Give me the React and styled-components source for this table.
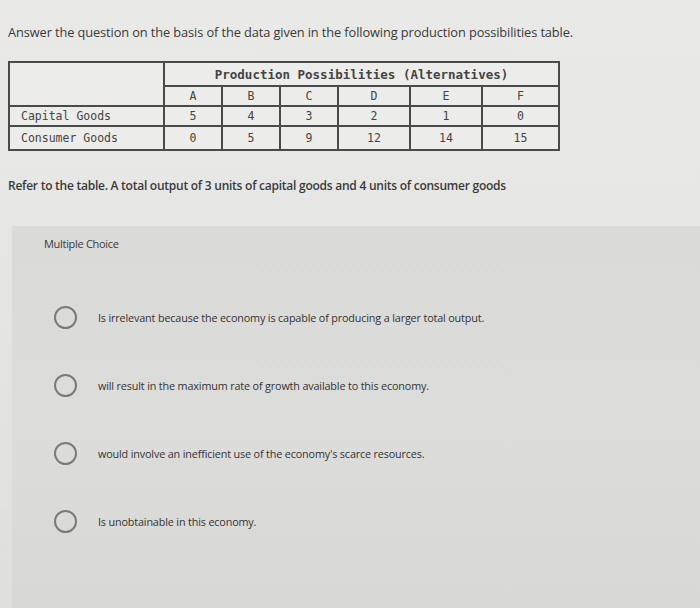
import React from 'react';
import styled, { createGlobalStyle } from 'styled-components';

const GlobalStyle = createGlobalStyle`
  html, body {
    margin: 0;
    padding: 0;
  }
  body {
    background: linear-gradient(180deg, #e9e9e7 0%, #e4e4e2 60%, #dededc 100%);
    font-family: "Open Sans", "Liberation Sans", sans-serif;
    color: #333;
    min-height: 608px;
    overflow: hidden;
  }
`;

const Page = styled.div`
  width: 700px;
  height: 608px;
  display: flex;
  flex-direction: column;
`;

const Intro = styled.p`
  margin: 24px 0 0 8px;
  font-size: 12.8px;
  letter-spacing: -0.1px;
  line-height: 16px;
  color: #3a3a3a;
`;

const Table = styled.table`
  margin: 21px 0 0 8px;
  width: 550px;
  table-layout: fixed;
  border-collapse: collapse;
  border: 2px solid #4a4a4a;
  font-family: "DejaVu Sans Mono", "Liberation Mono", monospace;
  color: #444;
`;

const Cell = styled.td`
  border: 2px solid #4a4a4a;
  padding: ${p => (p.$left ? '0 11px' : '0')};
  height: ${p => p.$h || 19}px;
  text-align: ${p => (p.$left ? 'left' : 'center')};
  font-size: ${p => (p.$head ? '12.5px' : '11.5px')};
  font-weight: ${p => (p.$head ? 600 : 400)};
  background: #ececea;
  white-space: nowrap;
`;

const Prompt = styled.p`
  margin: 27px 0 0 8px;
  font-size: 12px;
  font-weight: 600;
  letter-spacing: -0.25px;
  line-height: 16px;
  color: #3a3a3a;
`;

const ChoicePanel = styled.section`
  margin: 32px 0 0 12px;
  flex: 1;
  background: linear-gradient(180deg, #dadad8 0%, #dcdcda 50%, #d8d8d6 100%);
  padding: 10px 0 0 32px;
`;

const Label = styled.div`
  font-size: 11px;
  letter-spacing: -0.3px;
  color: #3a3a3a;
  line-height: 16px;
`;

const Options = styled.div`
  display: flex;
  flex-direction: column;
  gap: 46px;
  margin-top: 54px;
  padding-left: 10px;
`;

const Option = styled.label`
  display: flex;
  align-items: center;
  gap: 21px;
  height: 22px;
`;

const Radio = styled.span`
  width: 19px;
  height: 19px;
  border-radius: 50%;
  border: 2px solid #7a7a7a;
  flex-shrink: 0;
`;

const OptionText = styled.span`
  font-size: 10.8px;
  letter-spacing: -0.15px;
  color: #333;
`;

const colWidths = [155, 58, 58, 58, 72, 72, 77];
const letters = ['A', 'B', 'C', 'D', 'E', 'F'];
const rows = [
  ['Capital Goods', [5, 4, 3, 2, 1, 0], 18],
  ['Consumer Goods', [0, 5, 9, 12, 14, 15], 22],
];

const choices = [
  'Is irrelevant because the economy is capable of producing a larger total output.',
  'will result in the maximum rate of growth available to this economy.',
  "would involve an inefficient use of the economy's scarce resources.",
  'Is unobtainable in this economy.',
];

export default function App() {
  return (
    <Page>
      <GlobalStyle />
      <Intro>
        Answer the question on the basis of the data given in the following production possibilities table.
      </Intro>
      <Table>
        <colgroup>
          {colWidths.map((w, i) => (
            <col key={i} style={{ width: w }} />
          ))}
        </colgroup>
        <tbody>
          <tr>
            <Cell $left rowSpan={2} />
            <Cell colSpan={6} $head $h={22}>Production Possibilities (Alternatives)</Cell>
          </tr>
          <tr>
            {letters.map(l => (
              <Cell key={l} $h={18}>{l}</Cell>
            ))}
          </tr>
          {rows.map(([name, vals, h]) => (
            <tr key={name}>
              <Cell $left $h={h}>{name}</Cell>
              {vals.map((v, i) => (
                <Cell key={i} $h={h}>{v}</Cell>
              ))}
            </tr>
          ))}
        </tbody>
      </Table>
      <Prompt>
        Refer to the table. A total output of 3 units of capital goods and 4 units of consumer goods
      </Prompt>
      <ChoicePanel>
        <Label>Multiple Choice</Label>
        <Options>
          {choices.map(c => (
            <Option key={c}>
              <Radio />
              <OptionText>{c}</OptionText>
            </Option>
          ))}
        </Options>
      </ChoicePanel>
    </Page>
  );
}
